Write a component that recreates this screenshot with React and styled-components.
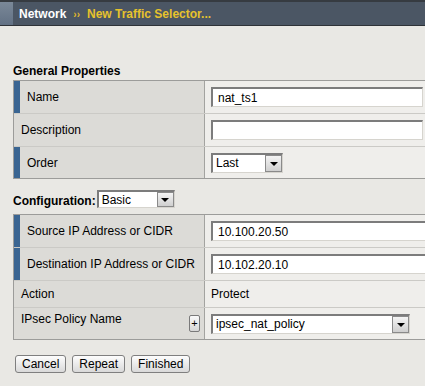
import React from 'react'
import styled, { createGlobalStyle } from 'styled-components'

const GlobalStyle = createGlobalStyle`
  html, body {
    margin: 0;
    padding: 0;
    background: #e9e8e4;
    overflow: hidden;
  }
  body {
    font-family: "Liberation Sans", Arial, sans-serif;
    font-size: 12px;
    color: #000;
  }
`

const Page = styled.div`
  width: 425px;
  height: 386px;
  overflow: hidden;
`

const Header = styled.div`
  display: flex;
  height: 23px;
  border-top: 2px solid #363b41;
  border-bottom: 1px solid #2e3237;
  background: #4b5664;
`

const HeaderEdge = styled.div`
  width: 13px;
  background: linear-gradient(180deg, #7a8898, #627184);
`

const Crumbs = styled.div`
  display: flex;
  align-items: center;
  gap: 6px;
  padding-left: 6px;
  font-weight: bold;
  font-size: 12px;
  color: #fff;
`

const CrumbSep = styled.span`
  color: #e0b92a;
  font-size: 10px;
  margin: 1px 1px 0;
`

const CrumbCurrent = styled.span`
  color: #e6c22c;
`

const Content = styled.div`
  padding-left: 13px;
`

const SectionTitle = styled.div`
  display: flex;
  align-items: ${p => p.$align || 'center'};
  gap: 1px;
  font-weight: bold;
  height: ${p => p.$h}px;
  padding-top: ${p => p.$top}px;
  margin-bottom: ${p => p.$bottom || 0}px;
`

const Table = styled.div`
  width: 430px;
  border: 1px solid #9c9c9a;
  border-right: none;
  background: #efeeeb;
`

const Row = styled.div`
  display: grid;
  grid-template-columns: 191px 1fr;
  height: ${p => p.$h}px;
  & + & {
    border-top: 1px solid #cbcac6;
  }
`

const Label = styled.div`
  display: flex;
  align-items: ${p => (p.$top ? 'flex-start' : 'center')};
  justify-content: space-between;
  box-sizing: border-box;
  padding: ${p => (p.$top ? '4px' : '0')} 4px 0 7px;
  background: #dcdbd7;
  border-left: ${p => (p.$required ? '6px solid #3a6592' : 'none')};
  border-right: 1px solid #a3a3a0;
`

const Value = styled.div`
  display: flex;
  align-items: center;
  padding-left: 6px;
`

const TextBox = styled.div`
  box-sizing: border-box;
  width: ${p => p.$w}px;
  height: 20px;
  flex-shrink: 0;
  display: flex;
  align-items: center;
  padding-left: 5px;
  background: #fff;
  border-top: 2px solid #7c7c7c;
  border-left: 2px solid #7c7c7c;
  border-right: 1px solid #d6d4ce;
  border-bottom: 1px solid #d6d4ce;
`

const Select = styled.div`
  box-sizing: border-box;
  width: ${p => p.$w}px;
  height: ${p => p.$h || 20}px;
  display: flex;
  align-items: stretch;
  font-weight: normal;
  background: #fff;
  border-top: 2px solid #7c7c7c;
  border-left: 2px solid #7c7c7c;
  border-right: 1px solid #d6d4ce;
  border-bottom: 1px solid #d6d4ce;
`

const SelectText = styled.span`
  flex: 1;
  display: flex;
  align-items: center;
  padding-left: 3px;
`

const SelectButton = styled.span`
  width: 15px;
  display: flex;
  align-items: center;
  justify-content: center;
  border: 1px solid #8a8a8a;
  background: linear-gradient(180deg, #f4f4f4, #cfcfcf);
  &::after {
    content: '';
    border-left: 4px solid transparent;
    border-right: 4px solid transparent;
    border-top: 4px solid #000;
    margin-top: 1px;
  }
`

const AddButton = styled.span`
  width: 9px;
  height: 15px;
  margin-top: 3px;
  border: 1px solid #7a7a7a;
  border-radius: 2px;
  background: linear-gradient(180deg, #fafafa, #d6d6d6);
  font-size: 11px;
  line-height: 15px;
  text-align: center;
`

const Buttons = styled.div`
  display: flex;
  gap: 6px;
  padding: 15px 0 0 2px;
`

const Button = styled.button`
  height: 18px;
  padding: 0 6px;
  font-family: "Liberation Sans", Arial, sans-serif;
  font-size: 12px;
  color: #000;
  border: 1px solid #7f7f7f;
  border-radius: 3px;
  background: linear-gradient(180deg, #fdfdfd, #d9d9d9);
`

const Field = ({ label, required, h = 32, children }) => (
  <Row $h={h}>
    <Label $required={required}>{label}</Label>
    <Value>{children}</Value>
  </Row>
)

const Dropdown = ({ w, h, children }) => (
  <Select $w={w} $h={h}>
    <SelectText>{children}</SelectText>
    <SelectButton />
  </Select>
)

export default function App() {
  return (
    <Page>
      <GlobalStyle />
      <Header>
        <HeaderEdge />
        <Crumbs>
          <span>Network</span>
          <CrumbSep>››</CrumbSep>
          <CrumbCurrent>New Traffic Selector...</CrumbCurrent>
        </Crumbs>
      </Header>
      <Content>
        <SectionTitle $top={35} $h={19}>General Properties</SectionTitle>
        <Table>
          <Field label="Name" required>
            <TextBox $w={212}>nat_ts1</TextBox>
          </Field>
          <Field label="Description">
            <TextBox $w={212} />
          </Field>
          <Field label="Order" required h={31}>
            <Dropdown w={72}>Last</Dropdown>
          </Field>
        </Table>
        <SectionTitle $top={11} $h={18} $bottom={6} $align="flex-end">
          Configuration: <Dropdown w={78} h={18}>Basic</Dropdown>
        </SectionTitle>
        <Table>
          <Field label="Source IP Address or CIDR" required>
            <TextBox $w={230}>10.100.20.50</TextBox>
          </Field>
          <Field label="Destination IP Address or CIDR" required>
            <TextBox $w={230}>10.102.20.10</TextBox>
          </Field>
          <Field label="Action" h={26}>
            Protect
          </Field>
          <Row $h={31}>
            <Label $top>
              IPsec Policy Name
              <AddButton>+</AddButton>
            </Label>
            <Value>
              <Dropdown w={199}>ipsec_nat_policy</Dropdown>
            </Value>
          </Row>
        </Table>
        <Buttons>
          <Button>Cancel</Button>
          <Button>Repeat</Button>
          <Button>Finished</Button>
        </Buttons>
      </Content>
    </Page>
  )
}
